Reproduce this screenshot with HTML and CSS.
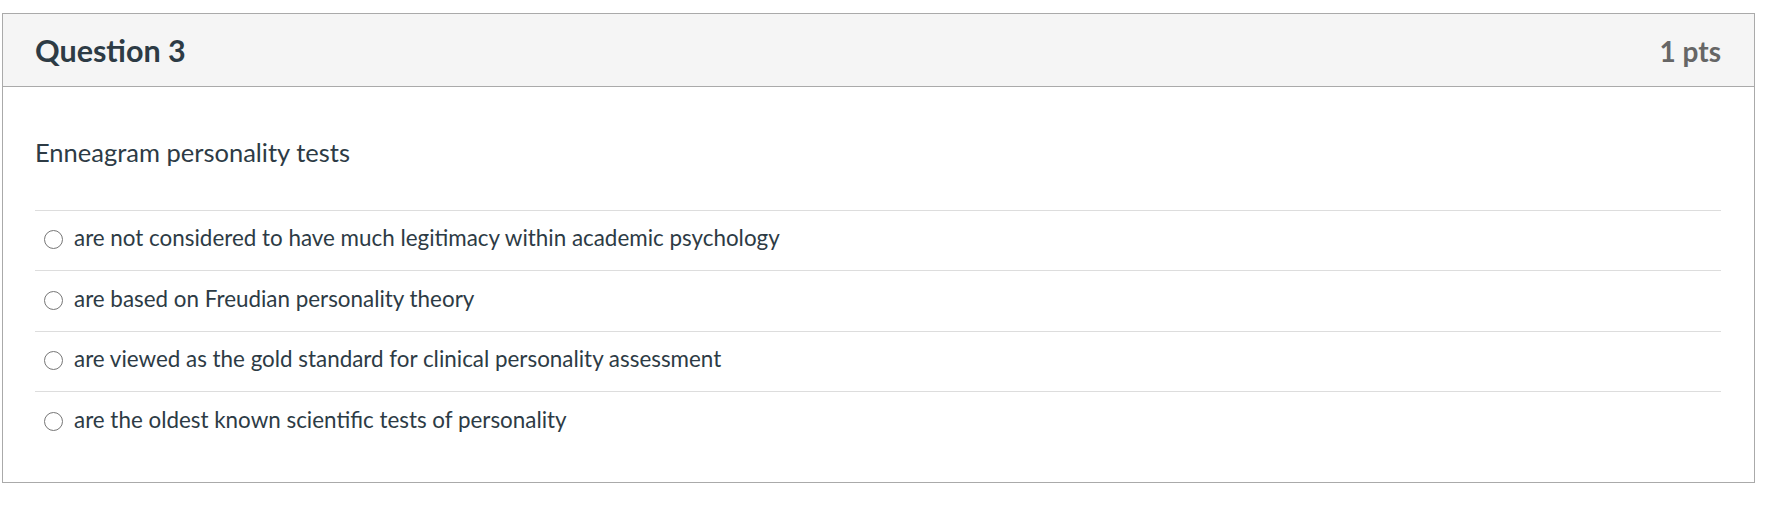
FILE: index.html
```html
<!DOCTYPE html>
<html lang="en">
<head>
<meta charset="utf-8">
<title>Question 3</title>
<link rel="stylesheet" href="styles.css">
</head>
<body>
<div class="question">
  <div class="q-header">
    <span class="q-name">Question 3</span>
    <span class="q-points">1 pts</span>
  </div>
  <div class="q-body">
    <div class="q-text">Enneagram personality tests</div>
    <div class="answers">
      <label class="answer"><span class="radio"></span><span class="answer-text">are not considered to have much legitimacy within academic psychology</span></label>
      <label class="answer"><span class="radio"></span><span class="answer-text">are based on Freudian personality theory</span></label>
      <label class="answer"><span class="radio"></span><span class="answer-text">are viewed as the gold standard for clinical personality assessment</span></label>
      <label class="answer"><span class="radio"></span><span class="answer-text">are the oldest known scientific tests of personality</span></label>
    </div>
  </div>
</div>
</body>
</html>
```
FILE: styles.css
```css
html, body {
  margin: 0;
  padding: 0;
  background: #ffffff;
}
body {
  font-family: Lato, "Noto Sans", "Liberation Sans", sans-serif;
  color: #2d3b45;
}
.question {
  box-sizing: border-box;
  width: 1753px;
  margin: 13px 0 0 2px;
  border: 1px solid #aaaaaa;
  background: #ffffff;
}
.q-header {
  box-sizing: border-box;
  height: 73px;
  padding: 17.5px 33px 0 32px;
  background: #f5f5f5;
  border-bottom: 1px solid #aaaaaa;
  display: flex;
  align-items: baseline;
  justify-content: space-between;
}
.q-name {
  font-size: 30.5px;
  font-weight: 700;
  line-height: 1.2;
  color: #2d3b45;
}
.q-points {
  font-size: 28px;
  font-weight: 700;
  line-height: 1.2;
  color: #666666;
}
.q-body {
  padding: 49.8px 33px 30.5px 32px;
}
.q-text {
  font-size: 25.5px;
  line-height: 1.2;
  margin-bottom: 42.6px;
}
.answers {
  display: flex;
  flex-direction: column;
}
.answer {
  box-sizing: border-box;
  height: 60.5px;
  border-top: 1px solid #dddddd;
  display: flex;
  align-items: center;
  font-size: 22.4px;
  line-height: 1.2;
}
.radio {
  box-sizing: border-box;
  flex: none;
  width: 19px;
  height: 19px;
  margin: 0 11.5px 2px 8.5px;
  border: 1.3px solid #767676;
  border-radius: 50%;
  background: #ffffff;
}
.answer-text {
  margin-bottom: 4px;
}
```
